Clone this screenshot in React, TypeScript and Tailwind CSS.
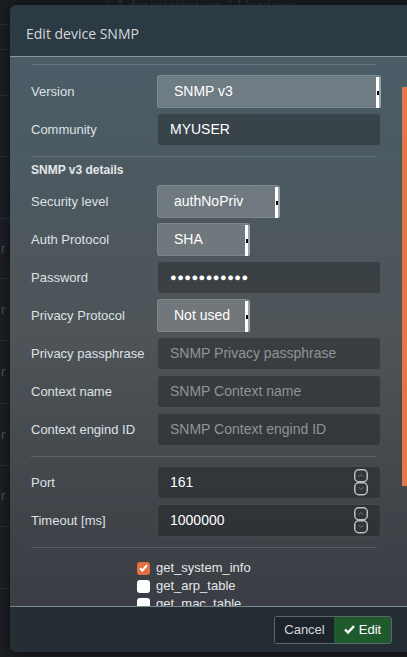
import React from 'react'

const font = { fontFamily: '"Liberation Sans", Arial, sans-serif' }

function Select({ value, width }: { value: string; width: string }) {
  return (
    <div className={`relative flex h-[33px] items-center rounded-[3px] border border-white/10 bg-white/20 pl-[16px] text-[14px] text-white ${width}`}>
      <span>{value}</span>
      <span className="absolute right-[-1px] top-[1px] flex h-[31px] w-[5px] items-center rounded-r-[2px] border-r-2 border-[#9aa3a8] bg-white">
        <span className="ml-[1px] h-[4px] w-[2px] bg-black" />
      </span>
    </div>
  )
}

function Input({ value, placeholder, password }: { value?: string; placeholder?: string; password?: boolean }) {
  return (
    <div className="flex h-[33px] flex-1 items-center rounded-[4px] border border-white/10 bg-black/25 pl-[12px] text-[14px]">
      {value ? (
        <span className={password ? 'text-[11px] font-bold tracking-[0.5px] text-white' : 'text-white'}>{value}</span>
      ) : (
        <span className="text-[#8e9499]">{placeholder}</span>
      )}
    </div>
  )
}

function NumberInput({ value }: { value: string }) {
  return (
    <div className="flex h-[33px] flex-1 items-center justify-between rounded-[4px] border border-white/10 bg-black/25 pl-[12px] pr-[12px] text-[14px] text-white">
      <span>{value}</span>
      <svg width="14" height="27" viewBox="0 0 14 27" fill="none">
        <rect x="0.75" y="0.75" width="12.5" height="12" rx="4" stroke="#b9bec2" strokeWidth="1.5" />
        <rect x="0.75" y="13.75" width="12.5" height="12" rx="4" stroke="#b9bec2" strokeWidth="1.5" />
        <path d="M4.5 8 L7 5.5 L9.5 8" stroke="#6f757a" strokeWidth="1" />
        <path d="M4.5 18 L7 20.5 L9.5 18" stroke="#6f757a" strokeWidth="1" />
      </svg>
    </div>
  )
}

function Row({ label, children }: { label: string; children: React.ReactNode }) {
  return (
    <div className="flex items-center">
      <div className="w-[126px] text-[13px] text-[#dde1e4]">{label}</div>
      <div className="flex flex-1">{children}</div>
    </div>
  )
}

function Check({ label, checked }: { label: string; checked?: boolean }) {
  return (
    <div className="flex h-[18px] items-center gap-[6px] pl-[106px] text-[13px] text-[#e4e7e9]">
      {checked ? (
        <span className="flex h-[13px] w-[13px] items-center justify-center rounded-[3px] bg-[#e0703f]">
          <svg width="9" height="8" viewBox="0 0 9 8">
            <path d="M1 4.2 L3.4 6.5 L8 1.2" stroke="white" strokeWidth="2" fill="none" />
          </svg>
        </span>
      ) : (
        <span className="h-[13px] w-[13px] rounded-[3px] bg-white" />
      )}
      <span>{label}</span>
    </div>
  )
}

export default function App() {
  return (
    <div className="relative h-[657px] w-[407px] overflow-hidden bg-[#1b1e22]" style={font}>
      {/* page behind the dialog */}
      <div className="absolute left-[105px] top-[-4px] text-[18px] leading-[20px] text-[#2e3339]" style={{ fontFamily: '"Liberation Serif", serif' }}>
        / Administration / Devices
      </div>
      <div className="flex flex-col pt-[24px]">
        {[25, 46, 61, 62, 60, 62, 63, 62, 61, 62, 62].map((h, i) => (
          <div key={i} className="flex items-center border-t border-[#2a2f35] text-[13px] text-[#4a5057]" style={{ height: h }}>
            {i > 3 && i < 9 ? <span className="ml-[1px]">r</span> : null}
          </div>
        ))}
      </div>

      {/* dialog */}
      <div className="absolute left-[10px] top-[5px] flex h-[647px] w-[420px] flex-col overflow-hidden rounded-[6px] shadow-[0_0_12px_rgba(0,0,0,0.6)]">
        <div className="flex h-[52px] items-center border-b border-[#8c989f] bg-[#2c3a43] pl-[16px] pt-[5px] text-[14px] text-[#d3d8db]" style={{ fontFamily: '"Open Sans", sans-serif' }}>
          Edit device SNMP
        </div>
        <div className="relative flex-1 overflow-hidden bg-gradient-to-b from-[#4a5d67] via-[#4e5458] to-[#3a3d43] pl-[21px] pr-[39px] pt-[7px]">
          <div className="w-[350px]">
            <div className="mr-[4px] border-t border-white/15" />
            <div className="flex flex-col gap-[5px] pt-[10px]">
              <Row label="Version">
                <Select value="SNMP v3" width="w-full" />
              </Row>
              <Row label="Community">
                <Input value="MYUSER" />
              </Row>
            </div>
            <div className="mr-[4px] mt-[10px] border-t border-white/15" />
            <div className="pt-[6px] text-[12px] font-bold leading-[15px] text-[#e4e7e9]">SNMP v3 details</div>
            <div className="flex flex-col gap-[5px] pt-[7px]">
              <Row label="Security level">
                <Select value="authNoPriv" width="w-[123px]" />
              </Row>
              <Row label="Auth Protocol">
                <Select value="SHA" width="w-[93px]" />
              </Row>
              <Row label="Password">
                <Input value="●●●●●●●●●●●" password />
              </Row>
              <Row label="Privacy Protocol">
                <Select value="Not used" width="w-[93px]" />
              </Row>
              <Row label="Privacy passphrase">
                <Input placeholder="SNMP Privacy passphrase" />
              </Row>
              <Row label="Context name">
                <Input placeholder="SNMP Context name" />
              </Row>
              <Row label="Context engind ID">
                <Input placeholder="SNMP Context engind ID" />
              </Row>
            </div>
            <div className="mr-[4px] mt-[10px] border-t border-white/15" />
            <div className="flex flex-col gap-[5px] pt-[9px]">
              <Row label="Port">
                <NumberInput value="161" />
              </Row>
              <Row label="Timeout [ms]">
                <NumberInput value="1000000" />
              </Row>
            </div>
            <div className="mr-[4px] mt-[10px] border-t border-white/15" />
            <div className="flex flex-col pt-[11px]">
              <Check label="get_system_info" checked />
              <Check label="get_arp_table" />
              <Check label="get_mac_table" />
            </div>
          </div>
          {/* scrollbar thumb */}
          <div className="absolute left-[392px] top-[30px] h-[399px] w-[6px] bg-[#e0784a]" />
        </div>
        <div className="flex h-[46px] items-center border-t border-[#7c8891] bg-[#252d35] pl-[264px]">
          <div className="flex h-[28px] overflow-hidden rounded-[3px] border border-[#5b656d] text-[13px]">
            <button className="w-[59px] bg-[#1d232a] text-[#d6dadd]">Cancel</button>
            <button className="flex w-[57px] items-center justify-center gap-[4px] bg-[#1f5a2d] text-white">
              <svg width="11" height="9" viewBox="0 0 11 9">
                <path d="M1 4.5 L4 7.5 L10 1.2" stroke="white" strokeWidth="2.4" fill="none" />
              </svg>
              Edit
            </button>
          </div>
        </div>
      </div>
    </div>
  )
}
